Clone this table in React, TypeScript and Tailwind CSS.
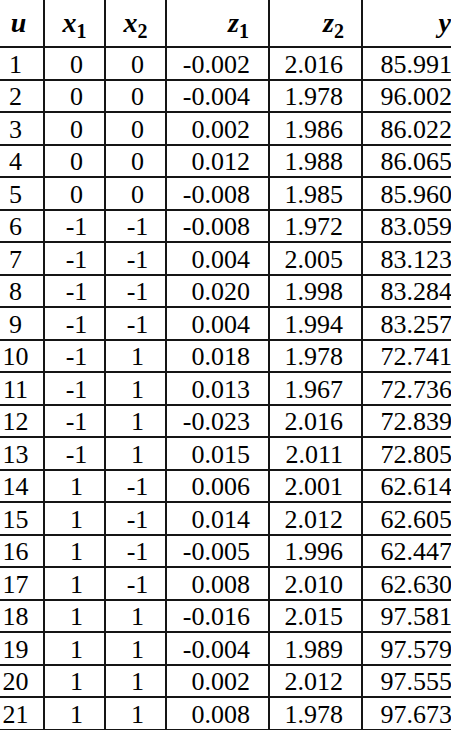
const rows: [number, number, number, string, string, string][] = [
  [1, 0, 0, "-0.002", "2.016", "85.991"],
  [2, 0, 0, "-0.004", "1.978", "96.002"],
  [3, 0, 0, "0.002", "1.986", "86.022"],
  [4, 0, 0, "0.012", "1.988", "86.065"],
  [5, 0, 0, "-0.008", "1.985", "85.960"],
  [6, -1, -1, "-0.008", "1.972", "83.059"],
  [7, -1, -1, "0.004", "2.005", "83.123"],
  [8, -1, -1, "0.020", "1.998", "83.284"],
  [9, -1, -1, "0.004", "1.994", "83.257"],
  [10, -1, 1, "0.018", "1.978", "72.741"],
  [11, -1, 1, "0.013", "1.967", "72.736"],
  [12, -1, 1, "-0.023", "2.016", "72.839"],
  [13, -1, 1, "0.015", "2.011", "72.805"],
  [14, 1, -1, "0.006", "2.001", "62.614"],
  [15, 1, -1, "0.014", "2.012", "62.605"],
  [16, 1, -1, "-0.005", "1.996", "62.447"],
  [17, 1, -1, "0.008", "2.010", "62.630"],
  [18, 1, 1, "-0.016", "2.015", "97.581"],
  [19, 1, 1, "-0.004", "1.989", "97.579"],
  [20, 1, 1, "0.002", "2.012", "97.555"],
  [21, 1, 1, "0.008", "1.978", "97.673"],
];

function Var({ name, sub }: { name: string; sub?: string }) {
  return (
    <span className="font-bold text-[28px]">
      <span className="italic">{name}</span>
      {sub && <span className="relative top-[6px] text-[20px] not-italic">{sub}</span>}
    </span>
  );
}

const cell = "border-2 border-[#151515] px-0 leading-none";

export default function App() {
  return (
    <div className="w-[451px] h-[730px] overflow-hidden bg-white text-black font-['Liberation_Serif','Times_New_Roman',serif]">
      <table className="ml-[-16px] mt-[-1px] w-[485px] min-w-[485px] table-fixed border-collapse text-[26px] font-['Liberation_Serif','Times_New_Roman',serif]">
        <colgroup>
          <col className="w-[59px]" />
          <col className="w-[61px]" />
          <col className="w-[61px]" />
          <col className="w-[103px]" />
          <col className="w-[93px]" />
          <col className="w-[108px]" />
        </colgroup>
        <thead>
          <tr className="h-[48px]">
            <th className={`${cell} border-t-0 text-center pl-[8px]`}>
              <Var name="u" />
            </th>
            <th className={`${cell} border-t-0 text-center`}>
              <Var name="x" sub="1" />
            </th>
            <th className={`${cell} border-t-0 text-center`}>
              <Var name="x" sub="2" />
            </th>
            <th className={`${cell} border-t-0 text-right pr-[19px]`}>
              <Var name="z" sub="1" />
            </th>
            <th className={`${cell} border-t-0 text-right pr-[17px]`}>
              <Var name="z" sub="2" />
            </th>
            <th className={`${cell} border-t-0 text-right pr-[18px]`}>
              <Var name="y" />
            </th>
          </tr>
        </thead>
        <tbody>
          {rows.map(([u, x1, x2, z1, z2, y]) => (
            <tr key={u} className="h-[32.5px]">
              <td className={`${cell} pt-[3px] text-center pl-[2px]`}>{u}</td>
              <td className={`${cell} pt-[3px] text-center pl-[4px]`}>{x1}</td>
              <td className={`${cell} pt-[3px] text-center pl-[4px]`}>{x2}</td>
              <td className={`${cell} pt-[3px] text-right pr-[18px]`}>{z1}</td>
              <td className={`${cell} pt-[3px] text-right pr-[18px]`}>{z2}</td>
              <td className={`${cell} pt-[3px] text-right pr-[17px]`}>{y}</td>
            </tr>
          ))}
        </tbody>
      </table>
    </div>
  );
}
